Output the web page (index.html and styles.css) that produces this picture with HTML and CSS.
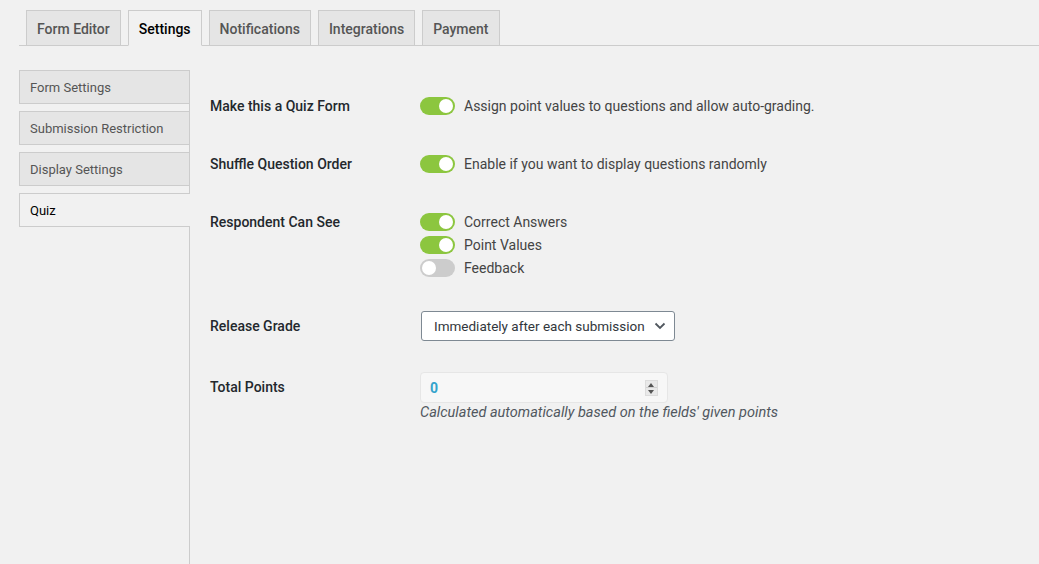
FILE: index.html
```html
<!DOCTYPE html>
<html lang="en">
<head>
    <meta charset="UTF-8">
    <title>Quiz Settings</title>
    <link rel="stylesheet" href="styles.css">
</head>
<body>
    <nav class="nav-tabs">
        <a class="nav-tab">Form Editor</a>
        <a class="nav-tab nav-tab-active">Settings</a>
        <a class="nav-tab">Notifications</a>
        <a class="nav-tab">Integrations</a>
        <a class="nav-tab">Payment</a>
    </nav>

    <div class="main">
        <ul class="side-menu">
            <li>Form Settings</li>
            <li>Submission Restriction</li>
            <li>Display Settings</li>
            <li class="active">Quiz</li>
        </ul>

        <div class="panel">
            <div class="row row-gap">
                <div class="row-label">Make this a Quiz Form</div>
                <div class="row-field">
                    <div class="switch-line"><span class="switch on"></span>Assign point values to questions and allow auto-grading.</div>
                </div>
            </div>

            <div class="row row-gap">
                <div class="row-label">Shuffle Question Order</div>
                <div class="row-field">
                    <div class="switch-line"><span class="switch on"></span>Enable if you want to display questions randomly</div>
                </div>
            </div>

            <div class="row row-gap-sm">
                <div class="row-label">Respondent Can See</div>
                <div class="row-field switch-list">
                    <div class="switch-line"><span class="switch on"></span>Correct Answers</div>
                    <div class="switch-line"><span class="switch on"></span>Point Values</div>
                    <div class="switch-line"><span class="switch"></span>Feedback</div>
                </div>
            </div>

            <div class="row row-gap-xs">
                <div class="row-label label-tall">Release Grade</div>
                <div class="row-field">
                    <div class="select-box">
                        <span>Immediately after each submission</span>
                        <svg width="12" height="8" viewBox="0 0 12 8"><polyline points="1.5,1.5 6,6 10.5,1.5" fill="none" stroke="#50575e" stroke-width="1.8"/></svg>
                    </div>
                </div>
            </div>

            <div class="row">
                <div class="row-label label-tall">Total Points</div>
                <div class="row-field">
                    <div class="number-box">
                        <span class="number-value">0</span>
                        <span class="spinner">
                            <span class="spin-up"></span>
                            <span class="spin-down"></span>
                        </span>
                    </div>
                    <p class="help">Calculated automatically based on the fields' given points</p>
                </div>
            </div>
        </div>
    </div>
</body>
</html>
```

FILE: styles.css
```css
* {
    box-sizing: border-box;
    margin: 0;
    padding: 0;
}
body {
    font-family: Roboto, "Open Sans", sans-serif;
    font-size: 13px;
    background-color: #f1f1f1;
    color: #444;
    min-height: 100vh;
}
.nav-tabs {
    display: flex;
    margin-left: 19px;
    padding-top: 10px;
    border-bottom: 1px solid #ccc;
}
.nav-tab {
    display: block;
    margin-left: 7px;
    margin-bottom: -1px;
    padding: 6px 10px 4px;
    font-size: 14px;
    font-weight: 500;
    line-height: 24px;
    color: #555;
    background-color: #e5e5e5;
    border: 1px solid #ccc;
}
.nav-tab-active {
    color: #000;
    background-color: #f1f1f1;
    border-bottom-color: #f1f1f1;
}
.main {
    display: flex;
    margin-top: 24px;
    min-height: calc(100vh - 70px);
}
.side-menu {
    list-style: none;
    width: 171px;
    margin-left: 19px;
    border-right: 1px solid #ccc;
}
.side-menu li {
    padding: 8px 10px 6px;
    line-height: 18px;
    margin-bottom: 7px;
    color: #555;
    background-color: #e5e5e5;
    border: 1px solid #ccc;
    border-right: none;
}
.side-menu li.active {
    margin-right: -1px;
    color: #000;
    background-color: #f1f1f1;
}
.panel {
    flex: 1;
    padding: 27px 20px 0;
    font-size: 14px;
}
.row {
    display: flex;
    align-items: flex-start;
}
.row-gap {
    margin-bottom: 40px;
}
.row-gap-sm {
    margin-bottom: 34px;
}
.row-gap-xs {
    margin-bottom: 31px;
}
.row-label {
    width: 210px;
    flex-shrink: 0;
    line-height: 18px;
    font-weight: 500;
    color: #23282d;
}
.label-tall {
    line-height: 30px;
}
.switch-list {
    display: flex;
    flex-direction: column;
    gap: 5px;
}
.switch-line {
    display: flex;
    align-items: center;
    line-height: 18px;
    height: 18px;
}
.switch {
    position: relative;
    width: 35px;
    height: 18px;
    margin-right: 9px;
    border-radius: 9px;
    background-color: #ccc;
}
.switch::after {
    content: "";
    position: absolute;
    top: 2px;
    left: 2px;
    width: 14px;
    height: 14px;
    border-radius: 50%;
    background-color: #fff;
}
.switch.on {
    background-color: #8cc63f;
}
.switch.on::after {
    left: 19px;
}
.select-box {
    display: flex;
    align-items: center;
    justify-content: space-between;
    width: 254px;
    height: 30px;
    margin-left: 1px;
    padding: 0 8px 0 12px;
    font-size: 13.5px;
    color: #32373c;
    background-color: #fff;
    border: 1px solid #7e8993;
    border-radius: 3px;
}
.number-box {
    display: flex;
    align-items: center;
    justify-content: space-between;
    width: 248px;
    height: 31px;
    padding: 0 9px 0 9px;
    background-color: #f7f7f7;
    border: 1px solid #e6e6e6;
    border-radius: 4px;
}
.number-value {
    font-size: 14px;
    font-weight: 700;
    color: #33a3cc;
}
.spinner {
    display: flex;
    flex-direction: column;
    width: 13px;
    height: 16px;
    background-color: #e9e9e9;
    border: 1px solid #dcdcdc;
}
.spin-up,
.spin-down {
    flex: 1;
    position: relative;
}
.spin-up {
    border-bottom: 1px solid #d0d0d0;
}
.spin-up::after,
.spin-down::after {
    content: "";
    position: absolute;
    left: 2px;
    border-left: 3.5px solid transparent;
    border-right: 3.5px solid transparent;
}
.spin-up::after {
    top: 2px;
    border-bottom: 4px solid #555;
}
.spin-down::after {
    top: 2px;
    border-top: 4px solid #555;
}
.help {
    margin-top: 1px;
    line-height: 18px;
    font-size: 14.5px;
    font-style: italic;
    color: #50575e;
}
```
